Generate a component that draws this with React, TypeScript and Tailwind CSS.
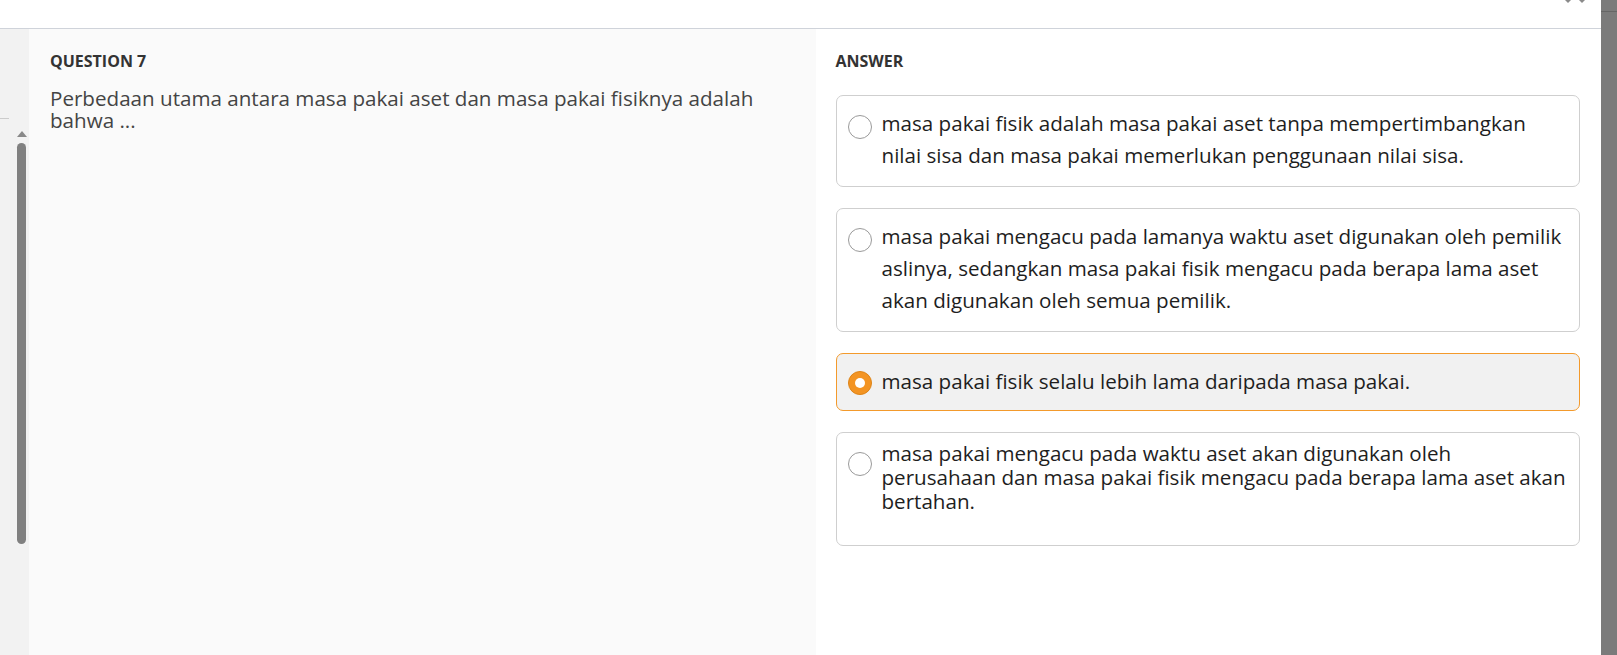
const options = [
  {
    text: "masa pakai fisik adalah masa pakai aset tanpa mempertimbangkan nilai sisa dan masa pakai memerlukan penggunaan nilai sisa.",
    selected: false,
    compact: false,
  },
  {
    text: "masa pakai mengacu pada lamanya waktu aset digunakan oleh pemilik aslinya, sedangkan masa pakai fisik mengacu pada berapa lama aset akan digunakan oleh semua pemilik.",
    selected: false,
    compact: false,
  },
  {
    text: "masa pakai fisik selalu lebih lama daripada masa pakai.",
    selected: true,
    compact: false,
  },
  {
    text: "masa pakai mengacu pada waktu aset akan digunakan oleh perusahaan dan masa pakai fisik mengacu pada berapa lama aset akan bertahan.",
    selected: false,
    compact: true,
  },
];

function Radio({ selected }: { selected: boolean }) {
  if (selected) {
    return (
      <div className="mt-[17px] flex h-[24px] w-[24px] shrink-0 items-center justify-center rounded-full border border-[#de8418] bg-[#f39423]">
        <div className="h-[10px] w-[10px] rounded-full bg-white" />
      </div>
    );
  }
  return <div className="mt-[19px] h-[24px] w-[24px] shrink-0 rounded-full border border-[#9a9a9a] bg-white" />;
}

function Option({ text, selected, compact }: { text: string; selected: boolean; compact: boolean }) {
  return (
    <div
      className={
        selected
          ? "flex items-start gap-[10px] rounded-[7px] border border-[#f39a2c] bg-[#f1f1f1] pl-[11px] pr-[11px]"
          : "flex items-start gap-[10px] rounded-[7px] border border-[#cfcfcf] bg-white pl-[11px] pr-[11px]"
      }
    >
      <Radio selected={selected} />
      {compact ? (
        <div className="pt-[8px] pb-[32px] text-[20.6px] leading-[24px] text-[#1e1e1e]">{text}</div>
      ) : (
        <div className={selected ? "pt-[11px] pb-[13px] text-[20.6px] leading-[32px] text-[#1e1e1e]" : "pt-[11px] pb-[15px] text-[20.6px] leading-[32px] text-[#1e1e1e]"}>
          {text}
        </div>
      )}
    </div>
  );
}

export default function App() {
  return (
    <div className="flex h-[655px] w-[1617px] overflow-hidden bg-white font-['Open_Sans',sans-serif]">
      <div className="flex flex-1 flex-col">
        {/* header strip */}
        <div className="relative h-[29px] shrink-0 border-b border-[#cfd3da] bg-white">
          <svg className="absolute right-[14px] top-0" width="22" height="4" viewBox="0 0 22 4">
            <path d="M0 0 L3 3 L6 0 Z" fill="#8a8a8a" />
            <path d="M14 0 L17 3 L20 0 Z" fill="#8a8a8a" />
          </svg>
        </div>

        <div className="flex flex-1">
          {/* left scroll strip */}
          <div className="flex w-[29px] shrink-0 flex-col bg-[#f2f2f2]">
            <div className="mt-[89px] h-px w-[9px] bg-[#cccccc]" />
            <div className="ml-[17px] mt-[12px] h-0 w-0 border-x-[5px] border-b-[6px] border-x-transparent border-b-[#888]" />
            <div className="ml-[17px] mt-[6px] h-[401px] w-[9px] rounded-full bg-[#808080]" />
          </div>

          {/* question */}
          <div className="flex-1 bg-[#fafafa] pl-[21px] pr-[21px] pt-[21px]">
            <div className="text-[16px] font-bold leading-[22px] text-[#333]">QUESTION 7</div>
            <div className="mt-[15px] text-[20.6px] leading-[22px] text-[#444]">
              Perbedaan utama antara masa pakai aset dan masa pakai fisiknya adalah bahwa ...
            </div>
          </div>

          {/* answer */}
          <div className="flex-1 bg-white pl-[20px] pr-[21px] pt-[21px]">
            <div className="text-[16px] font-bold leading-[22px] text-[#333]">ANSWER</div>
            <div className="mt-[23px] flex flex-col gap-[21px]">
              {options.map((o, i) => (
                <Option key={i} text={o.text} selected={o.selected} compact={o.compact} />
              ))}
            </div>
          </div>
        </div>
      </div>

      {/* right scrollbar */}
      <div className="flex w-[16px] shrink-0 flex-col bg-[#7b7b7b]">
        <div className="mt-[11px] h-px bg-[#666]" />
      </div>
    </div>
  );
}
